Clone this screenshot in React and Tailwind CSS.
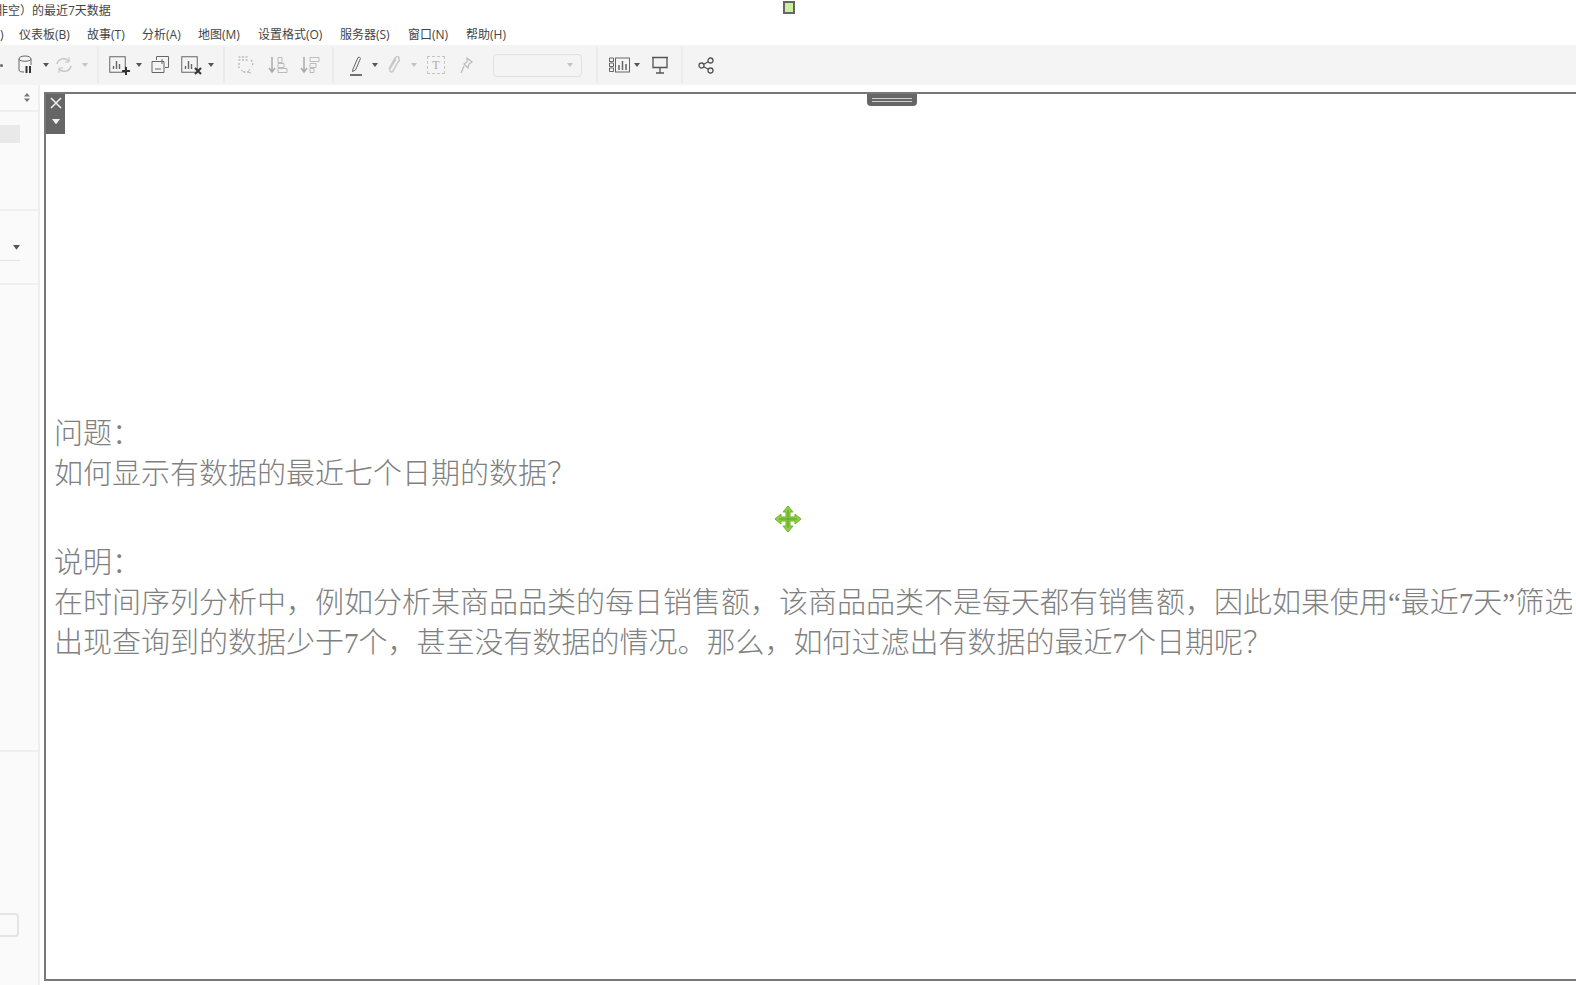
const menus = [
  { label: ')', width: 'w-[19px]' },
  { label: '仪表板(B)', width: 'w-[68px]' },
  { label: '故事(T)', width: 'w-[55px]' },
  { label: '分析(A)', width: 'w-[56px]' },
  { label: '地图(M)', width: 'w-[60px]' },
  { label: '设置格式(O)', width: 'w-[82px]' },
  { label: '服务器(S)', width: 'w-[68px]' },
  { label: '窗口(N)', width: 'w-[58px]' },
  { label: '帮助(H)', width: 'w-[50px]' },
];

const Caret = ({ light, fill, w = 6, className = '' }) => (
  <svg width={w} height={(w * 2) / 3} viewBox="0 0 6 4" className={className}>
    <path d="M0 0h6L3 4z" fill={fill || (light ? '#c4c4c4' : '#555')} />
  </svg>
);

const Separator = ({ className = '' }) => <div className={`h-9 w-0.5 bg-[#ebebeb] ${className}`} />;

const Svg = ({ w = 20, h = 22, className = '', children }) => (
  <svg width={w} height={h} viewBox={`0 0 ${w} ${h}`} fill="none" className={className}>
    {children}
  </svg>
);

const ChartBox = ({ stroke = '#666' }) => (
  <>
    <rect x="0.75" y="2.75" width="15.5" height="15.5" stroke={stroke} strokeWidth="1" />
    <path d="M4.5 15v-3M7.5 15V7M10.5 15v-5" stroke={stroke} strokeWidth="1.4" />
  </>
);

const Toolbar = () => (
  <div className="flex h-10 items-center overflow-hidden bg-[#f4f4f4]">
    <div className="h-[3px] w-[3px] shrink-0 rounded-full bg-[#666]" />
    <Svg w={15} h={22} className="ml-[15px] shrink-0">
      <path d="M1 5c0-4 12-4 12 0v6M1 5c0 3 12 3 12 0M1 5v11c0 1.500 2 2 5 2" stroke="#666" />
      <path d="M8.500 12v7M12 12v7" stroke="#333" strokeWidth="2" />
    </Svg>
    <Caret className="ml-[10px] shrink-0" />
    <Svg w={18} h={18} className="ml-[6px] shrink-0">
      <path d="M2 8a7 7 0 0 1 12-3M16 10a7 7 0 0 1-12 3" stroke="#c4c4c4" strokeWidth="1.500" />
      <path d="M14 1v5h-4M4 17v-5h4" stroke="#c4c4c4" />
    </Svg>
    <Caret light className="ml-[9px] shrink-0" />
    <Separator className="ml-[9px] shrink-0" />

    <Svg w={22} h={22} className="ml-[10px] shrink-0">
      <ChartBox />
      <path d="M17 13v8M13 17h8" stroke="#333" strokeWidth="2" />
    </Svg>
    <Caret className="ml-[5px] shrink-0" />
    <Svg w={18} h={20} className="ml-[9px] shrink-0">
      <path d="M5.500 5V1.500h12v11H14M1 6.500h12v11H1z" stroke="#666" fill="#f4f4f4" />
      <path d="M4 14h6M11 4v5" stroke="#666" />
    </Svg>
    <Svg w={22} h={22} className="ml-[12px] shrink-0">
      <ChartBox />
      <path d="M14 14l6 6M20 14l-6 6" stroke="#333" strokeWidth="2" />
    </Svg>
    <Caret className="ml-[5px] shrink-0" />
    <Separator className="ml-[9px] shrink-0" />

    <Svg w={18} h={20} className="ml-[12px] shrink-0">
      <path d="M1.500 2h9M1.500 5h9M2 8v5M14 5a6 6 0 0 1 1 7M12 17H6" stroke="#bbb" strokeDasharray="2 1.500" strokeWidth="1.500" />
      <path d="M13 14l-2 3 3 1M4 15l3 2" stroke="#bbb" />
    </Svg>
    <Svg w={20} h={20} className="ml-[13px] shrink-0">
      <path d="M4 2v14M1 13l3 4 3-4" stroke="#aaa" strokeWidth="1.500" />
      <path d="M10 2.500h4v5h-4zM10 8.500h6v4h-6zM10 13.500h9v4h-9z" stroke="#bbb" />
    </Svg>
    <Svg w={20} h={20} className="ml-[12px] shrink-0">
      <path d="M4 2v14M1 13l3 4 3-4" stroke="#aaa" strokeWidth="1.500" />
      <path d="M10 2.500h9v4h-9zM10 8.500h6v4h-6zM10 13.500h4v4h-4z" stroke="#bbb" />
    </Svg>
    <Separator className="ml-[12px] shrink-0" />

    <Svg w={14} h={21} className="ml-[15px] shrink-0">
      <path d="M4 14L9 2.500q2-1 2.500 1L6.500 15l-3 1.500z" stroke="#666" />
      <path d="M1 20h12" stroke="#444" strokeWidth="1.500" />
    </Svg>
    <Caret className="ml-[9px] shrink-0" />
    <Svg w={14} h={20} className="ml-[9px] shrink-0">
      <path d="M2 14L8 3q3-3 4 0t-1 4l-5 9q-2 2-3 0t1-4l5-8" stroke="#c8c8c8" strokeWidth="1.500" />
    </Svg>
    <Caret light className="ml-[10px] shrink-0" />
    <div className="ml-[10px] flex h-[18px] w-[18px] shrink-0 items-center justify-center border border-dashed border-[#c4c4c4] font-['Liberation_Serif',serif] text-xs leading-none text-[#aaa]">
      T
    </div>
    <Svg w={14} h={18} className="ml-[15px] shrink-0">
      <path d="M7 2l5 4-3 2-1 4-4-4 3-2zM4 10l-3 7" stroke="#bbb" strokeWidth="1.200" />
    </Svg>
    <div className="ml-[19px] flex h-[23px] w-[89px] shrink-0 items-center justify-end rounded-sm border border-[#e0e0e0] pr-2">
      <Caret light />
    </div>
    <Separator className="ml-[14px] shrink-0" />

    <Svg w={21} h={16} className="ml-[11px] shrink-0">
      <path d="M.5 1h4v3.500h-4zM.5 6h4v3.500h-4zM.5 11h4v3.500h-4z" stroke="#666" />
      <rect x="6.500" y="1" width="14" height="14" stroke="#666" />
      <path d="M10 13V8M13.500 13V4M17 13V7" stroke="#666" strokeWidth="1.500" />
    </Svg>
    <Caret className="ml-[4px] shrink-0" />
    <Svg w={18} h={20} className="ml-[11px] shrink-0">
      <path d="M1 2.500h16M2 2.500v10h14v-10M9 12.500v5M5 18h8" stroke="#555" strokeWidth="1.300" />
    </Svg>
    <Separator className="ml-[12px] shrink-0" />

    <Svg w={16} h={17} className="ml-[15px] shrink-0">
      <circle cx="12.500" cy="3.500" r="2.500" stroke="#555" strokeWidth="1.300" />
      <circle cx="3.500" cy="8.500" r="2.500" stroke="#555" strokeWidth="1.300" />
      <circle cx="12.500" cy="13.500" r="2.500" stroke="#555" strokeWidth="1.300" />
      <path d="M5.700 7.300l4.600-2.600M5.700 9.700l4.600 2.600" stroke="#555" strokeWidth="1.300" />
    </Svg>
  </div>
);

const Sidebar = () => (
  <aside className="flex w-10 shrink-0 flex-col border-r-2 border-[#eeeeee] bg-[#fafafa]">
    <div className="flex h-[27px] shrink-0 items-center justify-end border-b-2 border-[#efefef] pr-[8px]">
      <svg width="6" height="9" viewBox="0 0 6 9">
        <path d="M0 3.500L3 0l3 3.500zM0 5.500L3 9l3-3.500z" fill="#777" />
      </svg>
    </div>
    <div className="mt-[13px] h-[18px] w-5 shrink-0 bg-[#e9e9e9]" />
    <div className="mt-[66px] h-0.5 shrink-0 bg-[#efefef]" />
    <div className="flex h-[50px] w-[20px] shrink-0 items-end justify-end border-b border-[#e4e4e4] pb-2.5">
      <Caret w={7} />
    </div>
    <div className="mt-[22px] h-0.5 shrink-0 bg-[#efefef]" />
    <div className="mt-[465px] h-0.5 shrink-0 bg-[#efefef]" />
    <div className="mt-[161px] h-6 w-[19px] shrink-0 rounded-r-sm border-2 border-l-0 border-[#e4e4e4]" />
  </aside>
);

const MoveCursor = () => (
  <svg width="28" height="28" viewBox="0 0 28 28" className="absolute left-[728px] top-[411px]">
    <path
      d="M14 1l5 6h-3v5h5V9l6 5-6 5v-3h-5v5h3l-5 6-5-6h3v-5H7v3l-6-5 6-5v3h5V7H9z"
      fill="#8ccf3f"
      stroke="#6fb32c"
      strokeWidth="1"
    />
    <path d="M14 5v18M5 14h18" stroke="#5c9e22" strokeWidth="1" />
  </svg>
);

const Canvas = () => (
  <main className="relative ml-1 mt-[7px] mb-1 min-w-0 flex-1 overflow-hidden border-y-2 border-l-2 border-[#777] bg-white">
    <div className="absolute left-0 top-0 flex h-[40px] w-[19px] flex-col items-center bg-[#666]">
      <svg width="12" height="12" viewBox="0 0 12 12" className="mt-[3px]">
        <path d="M1 1l10 10M11 1L1 11" stroke="#f2f2f2" strokeWidth="1.500" />
      </svg>
      <Caret fill="#f2f2f2" w={8} className="mt-[10px]" />
    </div>
    <div className="absolute left-[821px] top-0 flex h-[12px] w-[50px] flex-col items-center justify-center gap-0.5 rounded-b-sm bg-[#666]">
      <div className="h-px w-10 bg-[#d0d0d0]" />
      <div className="h-px w-10 bg-[#d0d0d0]" />
    </div>
    <MoveCursor />
    <div className="whitespace-nowrap pl-2 pt-[320px] font-['Liberation_Serif','Noto_Sans_CJK_SC',serif] text-[29px] font-light leading-10 text-[#808080]">
      <p>问题：</p>
      <p>如何显示有数据的最近七个日期的数据？</p>
      <p className="mt-[49px]">说明：</p>
      <p>在时间序列分析中，例如分析某商品品类的每日销售额，该商品品类不是每天都有销售额，因此如果使用“最近7天”筛选</p>
      <p>出现查询到的数据少于7个，甚至没有数据的情况。那么，如何过滤出有数据的最近7个日期呢？</p>
    </div>
  </main>
);

export default function App() {
  return (
    <div className="relative flex h-[985px] w-[1576px] flex-col overflow-hidden bg-white font-['Open_Sans','Noto_Sans_CJK_SC',sans-serif] text-xs text-[#444]">
      <header className="h-[45px] shrink-0">
        <div className="flex h-[22px] items-center">
          <span className="-ml-1 whitespace-nowrap">非空）的最近7天数据</span>
        </div>
        <nav className="flex h-[23px] items-center pt-0.5">
          {menus.map((menu) => (
            <span key={menu.label} className={`${menu.width} shrink-0 whitespace-nowrap`}>
              {menu.label}
            </span>
          ))}
        </nav>
      </header>
      <div className="absolute left-[783px] top-[1px] h-[13px] w-3 border-2 border-[#666] bg-[#cdeea0]" />
      <Toolbar />
      <div className="flex min-h-0 flex-1">
        <Sidebar />
        <Canvas />
      </div>
    </div>
  );
}
